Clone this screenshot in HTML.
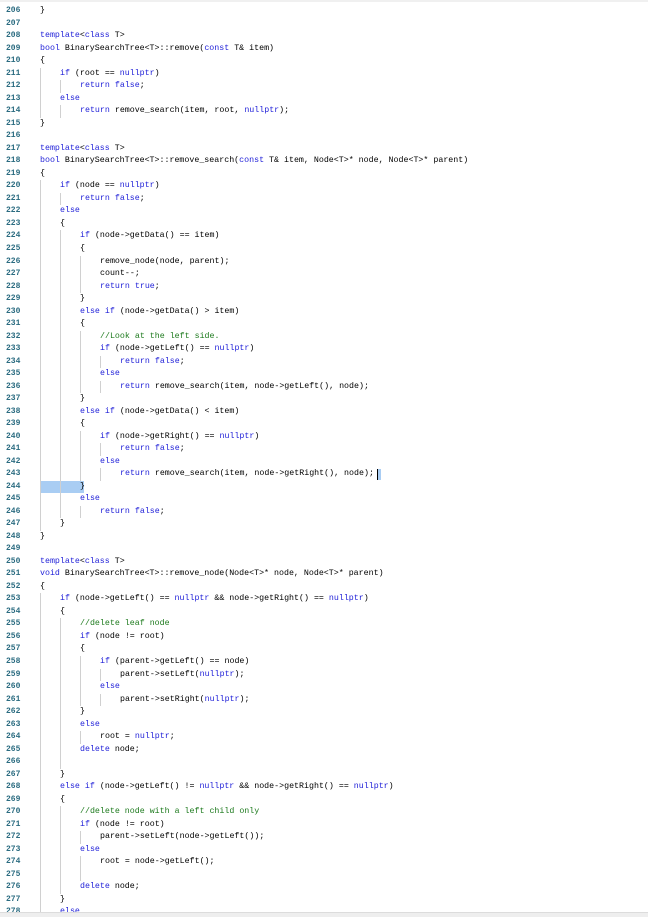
<!DOCTYPE html>
<html><head><meta charset="utf-8"><style>
html,body{margin:0;padding:0;background:#fff;width:648px;height:917px;overflow:hidden}
body{position:relative;font-family:"Liberation Mono",monospace;font-size:8.3px;color:#000}
#top{position:absolute;left:0;top:0;width:648px;height:2px;background:#f0f0f0}
#code{position:absolute;left:0;top:5.2px}
.l{height:12.52px;line-height:12.52px;white-space:pre;position:relative}
.l b{position:absolute;left:6px;color:#2a6b80;font-weight:bold;font-size:8px}
.t{position:absolute;left:40px;top:0}
u{display:inline-block;width:20px;height:12.52px;vertical-align:top;border-left:1px solid #d0d0d0;box-sizing:border-box;text-decoration:none}
em{font-style:normal;color:#1f1fd8}
i{font-style:normal;color:#1d7a1d}
.sel{position:absolute;left:40px;top:0;width:44px;height:12.52px;background:#a9cdf3}
.cur{position:absolute;left:377px;top:1px;width:4px;height:11px;background:#a9cdf3;border-left:1px solid #000;box-sizing:border-box}
#bot{position:absolute;left:0;top:912px;width:648px;height:5px;background:#eeeeee;border-top:1px solid #dcdcdc}
</style></head><body>
<div id="top"></div>
<div id="code">
<div class="l"><b>206</b><span class="t">}</span></div>
<div class="l"><b>207</b></div>
<div class="l"><b>208</b><span class="t"><em>template</em>&lt;<em>class</em> T&gt;</span></div>
<div class="l"><b>209</b><span class="t"><em>bool</em> BinarySearchTree&lt;T&gt;::remove(<em>const</em> T&amp; item)</span></div>
<div class="l"><b>210</b><span class="t">{</span></div>
<div class="l"><b>211</b><span class="t"><u></u><em>if</em> (root == <em>nullptr</em>)</span></div>
<div class="l"><b>212</b><span class="t"><u></u><u></u><em>return</em> <em>false</em>;</span></div>
<div class="l"><b>213</b><span class="t"><u></u><em>else</em></span></div>
<div class="l"><b>214</b><span class="t"><u></u><u></u><em>return</em> remove_search(item, root, <em>nullptr</em>);</span></div>
<div class="l"><b>215</b><span class="t">}</span></div>
<div class="l"><b>216</b></div>
<div class="l"><b>217</b><span class="t"><em>template</em>&lt;<em>class</em> T&gt;</span></div>
<div class="l"><b>218</b><span class="t"><em>bool</em> BinarySearchTree&lt;T&gt;::remove_search(<em>const</em> T&amp; item, Node&lt;T&gt;* node, Node&lt;T&gt;* parent)</span></div>
<div class="l"><b>219</b><span class="t">{</span></div>
<div class="l"><b>220</b><span class="t"><u></u><em>if</em> (node == <em>nullptr</em>)</span></div>
<div class="l"><b>221</b><span class="t"><u></u><u></u><em>return</em> <em>false</em>;</span></div>
<div class="l"><b>222</b><span class="t"><u></u><em>else</em></span></div>
<div class="l"><b>223</b><span class="t"><u></u>{</span></div>
<div class="l"><b>224</b><span class="t"><u></u><u></u><em>if</em> (node-&gt;getData() == item)</span></div>
<div class="l"><b>225</b><span class="t"><u></u><u></u>{</span></div>
<div class="l"><b>226</b><span class="t"><u></u><u></u><u></u>remove_node(node, parent);</span></div>
<div class="l"><b>227</b><span class="t"><u></u><u></u><u></u>count--;</span></div>
<div class="l"><b>228</b><span class="t"><u></u><u></u><u></u><em>return</em> <em>true</em>;</span></div>
<div class="l"><b>229</b><span class="t"><u></u><u></u>}</span></div>
<div class="l"><b>230</b><span class="t"><u></u><u></u><em>else</em> <em>if</em> (node-&gt;getData() &gt; item)</span></div>
<div class="l"><b>231</b><span class="t"><u></u><u></u>{</span></div>
<div class="l"><b>232</b><span class="t"><u></u><u></u><u></u><i>//Look at the left side.</i></span></div>
<div class="l"><b>233</b><span class="t"><u></u><u></u><u></u><em>if</em> (node-&gt;getLeft() == <em>nullptr</em>)</span></div>
<div class="l"><b>234</b><span class="t"><u></u><u></u><u></u><u></u><em>return</em> <em>false</em>;</span></div>
<div class="l"><b>235</b><span class="t"><u></u><u></u><u></u><em>else</em></span></div>
<div class="l"><b>236</b><span class="t"><u></u><u></u><u></u><u></u><em>return</em> remove_search(item, node-&gt;getLeft(), node);</span></div>
<div class="l"><b>237</b><span class="t"><u></u><u></u>}</span></div>
<div class="l"><b>238</b><span class="t"><u></u><u></u><em>else</em> <em>if</em> (node-&gt;getData() &lt; item)</span></div>
<div class="l"><b>239</b><span class="t"><u></u><u></u>{</span></div>
<div class="l"><b>240</b><span class="t"><u></u><u></u><u></u><em>if</em> (node-&gt;getRight() == <em>nullptr</em>)</span></div>
<div class="l"><b>241</b><span class="t"><u></u><u></u><u></u><u></u><em>return</em> <em>false</em>;</span></div>
<div class="l"><b>242</b><span class="t"><u></u><u></u><u></u><em>else</em></span></div>
<div class="l"><b>243</b><span class="cur"></span><span class="t"><u></u><u></u><u></u><u></u><em>return</em> remove_search(item, node-&gt;getRight(), node);</span></div>
<div class="l"><b>244</b><span class="sel"></span><span class="t"><u></u><u></u>}</span></div>
<div class="l"><b>245</b><span class="t"><u></u><u></u><em>else</em></span></div>
<div class="l"><b>246</b><span class="t"><u></u><u></u><u></u><em>return</em> <em>false</em>;</span></div>
<div class="l"><b>247</b><span class="t"><u></u>}</span></div>
<div class="l"><b>248</b><span class="t">}</span></div>
<div class="l"><b>249</b></div>
<div class="l"><b>250</b><span class="t"><em>template</em>&lt;<em>class</em> T&gt;</span></div>
<div class="l"><b>251</b><span class="t"><em>void</em> BinarySearchTree&lt;T&gt;::remove_node(Node&lt;T&gt;* node, Node&lt;T&gt;* parent)</span></div>
<div class="l"><b>252</b><span class="t">{</span></div>
<div class="l"><b>253</b><span class="t"><u></u><em>if</em> (node-&gt;getLeft() == <em>nullptr</em> &amp;&amp; node-&gt;getRight() == <em>nullptr</em>)</span></div>
<div class="l"><b>254</b><span class="t"><u></u>{</span></div>
<div class="l"><b>255</b><span class="t"><u></u><u></u><i>//delete leaf node</i></span></div>
<div class="l"><b>256</b><span class="t"><u></u><u></u><em>if</em> (node != root)</span></div>
<div class="l"><b>257</b><span class="t"><u></u><u></u>{</span></div>
<div class="l"><b>258</b><span class="t"><u></u><u></u><u></u><em>if</em> (parent-&gt;getLeft() == node)</span></div>
<div class="l"><b>259</b><span class="t"><u></u><u></u><u></u><u></u>parent-&gt;setLeft(<em>nullptr</em>);</span></div>
<div class="l"><b>260</b><span class="t"><u></u><u></u><u></u><em>else</em></span></div>
<div class="l"><b>261</b><span class="t"><u></u><u></u><u></u><u></u>parent-&gt;setRight(<em>nullptr</em>);</span></div>
<div class="l"><b>262</b><span class="t"><u></u><u></u>}</span></div>
<div class="l"><b>263</b><span class="t"><u></u><u></u><em>else</em></span></div>
<div class="l"><b>264</b><span class="t"><u></u><u></u><u></u>root = <em>nullptr</em>;</span></div>
<div class="l"><b>265</b><span class="t"><u></u><u></u><em>delete</em> node;</span></div>
<div class="l"><b>266</b><span class="t"><u></u><u></u></span></div>
<div class="l"><b>267</b><span class="t"><u></u>}</span></div>
<div class="l"><b>268</b><span class="t"><u></u><em>else</em> <em>if</em> (node-&gt;getLeft() != <em>nullptr</em> &amp;&amp; node-&gt;getRight() == <em>nullptr</em>)</span></div>
<div class="l"><b>269</b><span class="t"><u></u>{</span></div>
<div class="l"><b>270</b><span class="t"><u></u><u></u><i>//delete node with a left child only</i></span></div>
<div class="l"><b>271</b><span class="t"><u></u><u></u><em>if</em> (node != root)</span></div>
<div class="l"><b>272</b><span class="t"><u></u><u></u><u></u>parent-&gt;setLeft(node-&gt;getLeft());</span></div>
<div class="l"><b>273</b><span class="t"><u></u><u></u><em>else</em></span></div>
<div class="l"><b>274</b><span class="t"><u></u><u></u><u></u>root = node-&gt;getLeft();</span></div>
<div class="l"><b>275</b><span class="t"><u></u><u></u><u></u></span></div>
<div class="l"><b>276</b><span class="t"><u></u><u></u><em>delete</em> node;</span></div>
<div class="l"><b>277</b><span class="t"><u></u>}</span></div>
<div class="l"><b>278</b><span class="t"><u></u><em>else</em></span></div>
</div>
<div id="bot"></div>
</body></html>
